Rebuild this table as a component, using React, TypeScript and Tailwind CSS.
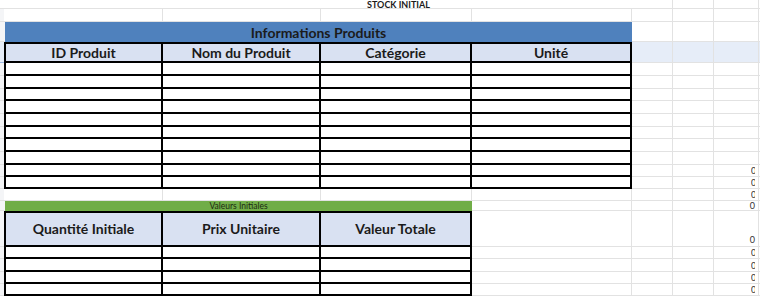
import React from "react";

const G = "border-[#e2e2e2]";

type Mark = "c" | "0" | "0b" | undefined;

function RightCells({ hl, mark }: { hl?: boolean; mark?: Mark }) {
  const bg = hl ? "bg-[#e6edf8]" : "bg-white";
  return (
    <>
      <div className={`w-[41px] shrink-0 border-r border-b ${G} ${bg}`} />
      <div className={`w-[41px] shrink-0 border-r border-b ${G} ${bg}`} />
      <div
        className={`w-[45px] shrink-0 border-r border-b ${G} ${bg} flex justify-end pr-[3px] text-[9px] leading-none text-[#333] ${
          mark === "0b" ? "items-end pb-[2px]" : "items-center"
        }`}
      >
        {mark === "c" && <span className="inline-block w-[4px] overflow-hidden">0</span>}
        {(mark === "0" || mark === "0b") && <span className="inline-block">0</span>}
      </div>
      <div className={`flex-1 border-b ${G} ${bg}`} />
    </>
  );
}

function Gutter({ w = "w-[4px]", hl }: { w?: string; hl?: boolean }) {
  return <div className={`${w} shrink-0 border-b ${hl ? "border-[#9db7e0] bg-[#e6edf8]" : `${G} bg-[#f4f5f7]`}`} />;
}

const cellBase = "shrink-0 border-black border-r-2 border-b-2";
const W1 = "w-[159px] border-l-2";
const W2 = "w-[158px]";
const W3 = "w-[151px]";
const W4 = "w-[160px]";

const rows1 = ["h-[13px]", "h-[13px]", "h-[12px]", "h-[13px]", "h-[13px]", "h-[12px]", "h-[13px]", "h-[13px]", "h-[12px]", "h-[12px]"];
const marks1: Mark[] = [undefined, undefined, undefined, undefined, undefined, undefined, undefined, undefined, "c", "c"];
const rows2 = ["h-[12px]", "h-[13px]", "h-[12px]", "h-[12px]"];

export default function App() {
  return (
    <div className="w-[760px] h-[297px] overflow-hidden bg-white font-['Lato','Noto_Sans',sans-serif] text-[#1b1b1b]">
      {/* title row */}
      <div className="flex h-[9px]">
        <div className={`w-[673px] shrink-0 border-r border-b ${G} flex items-start pl-[367px]`}>
          <span className="text-[9px] font-bold leading-[9px] whitespace-nowrap">STOCK INITIAL</span>
        </div>
        <div className={`w-[41px] shrink-0 border-r border-b ${G}`} />
        <div className={`w-[45px] shrink-0 border-r border-b ${G}`} />
        <div className={`flex-1 border-b ${G}`} />
      </div>

      {/* empty row */}
      <div className="flex h-[13px]">
        <Gutter />
        <div className={`w-[159px] shrink-0 border-r border-b ${G}`} />
        <div className={`w-[158px] shrink-0 border-r border-b ${G}`} />
        <div className={`w-[151px] shrink-0 border-r border-b ${G}`} />
        <div className={`w-[160px] shrink-0 border-r border-b ${G}`} />
        <RightCells />
      </div>

      {/* blue title row */}
      <div className="flex h-[20px]">
        <Gutter w="w-[5px]" />
        <div className="w-[627px] shrink-0 bg-[#4f81bd] flex items-center justify-center text-[14px] font-bold leading-none pt-[1px]">
          Informations Produits
        </div>
        <RightCells />
      </div>

      {/* header row 1 */}
      <div className="flex h-[21px]">
        <Gutter hl />
        {[
          [W1, "ID Produit"],
          [W2, "Nom du Produit"],
          [W3, "Catégorie"],
          [W4, "Unité"],
        ].map(([w, t]) => (
          <div
            key={t}
            className={`${cellBase} ${w} border-t-2 bg-[#d9e1f2] flex items-center justify-center text-[14px] font-bold leading-none`}
          >
            {t}
          </div>
        ))}
        <RightCells hl />
      </div>

      {/* data rows 1 */}
      {rows1.map((h, i) => (
        <div key={i} className={`flex ${h}`}>
          <Gutter />
          <div className={`${cellBase} ${W1}`} />
          <div className={`${cellBase} ${W2}`} />
          <div className={`${cellBase} ${W3}`} />
          <div className={`${cellBase} ${W4}`} />
          <RightCells mark={marks1[i]} />
        </div>
      ))}

      {/* empty row */}
      <div className="flex h-[12px]">
        <Gutter />
        <div className={`w-[159px] shrink-0 border-r border-b ${G}`} />
        <div className={`w-[158px] shrink-0 border-r border-b ${G}`} />
        <div className={`w-[151px] shrink-0 border-r border-b ${G}`} />
        <div className={`w-[160px] shrink-0 border-r border-b ${G}`} />
        <RightCells mark="c" />
      </div>

      {/* green row */}
      <div className="flex h-[10px]">
        <Gutter w="w-[5px]" />
        <div className="w-[467px] shrink-0 bg-[#70ad47] flex items-center justify-center text-[8.5px] leading-none text-[#1c2a12]">
          Valeurs Initiales
        </div>
        <div className={`w-[160px] shrink-0 border-r border-b ${G}`} />
        <RightCells mark="0" />
      </div>

      {/* header row 2 */}
      <div className="flex h-[36px]">
        <Gutter />
        {[
          [W1, "Quantité Initiale"],
          [W2, "Prix Unitaire"],
          [W3, "Valeur Totale"],
        ].map(([w, t]) => (
          <div
            key={t}
            className={`${cellBase} ${w} border-t-2 bg-[#d9e1f2] flex items-center justify-center text-[14px] font-bold leading-none`}
          >
            {t}
          </div>
        ))}
        <div className={`w-[160px] shrink-0 border-r border-b ${G}`} />
        <RightCells mark="0b" />
      </div>

      {/* data rows 2 */}
      {rows2.map((h, i) => (
        <div key={i} className={`flex ${h}`}>
          <Gutter />
          <div className={`${cellBase} ${W1}`} />
          <div className={`${cellBase} ${W2}`} />
          <div className={`${cellBase} ${W3}`} />
          <div className={`w-[160px] shrink-0 border-r border-b ${G}`} />
          <RightCells mark="c" />
        </div>
      ))}
    </div>
  );
}
